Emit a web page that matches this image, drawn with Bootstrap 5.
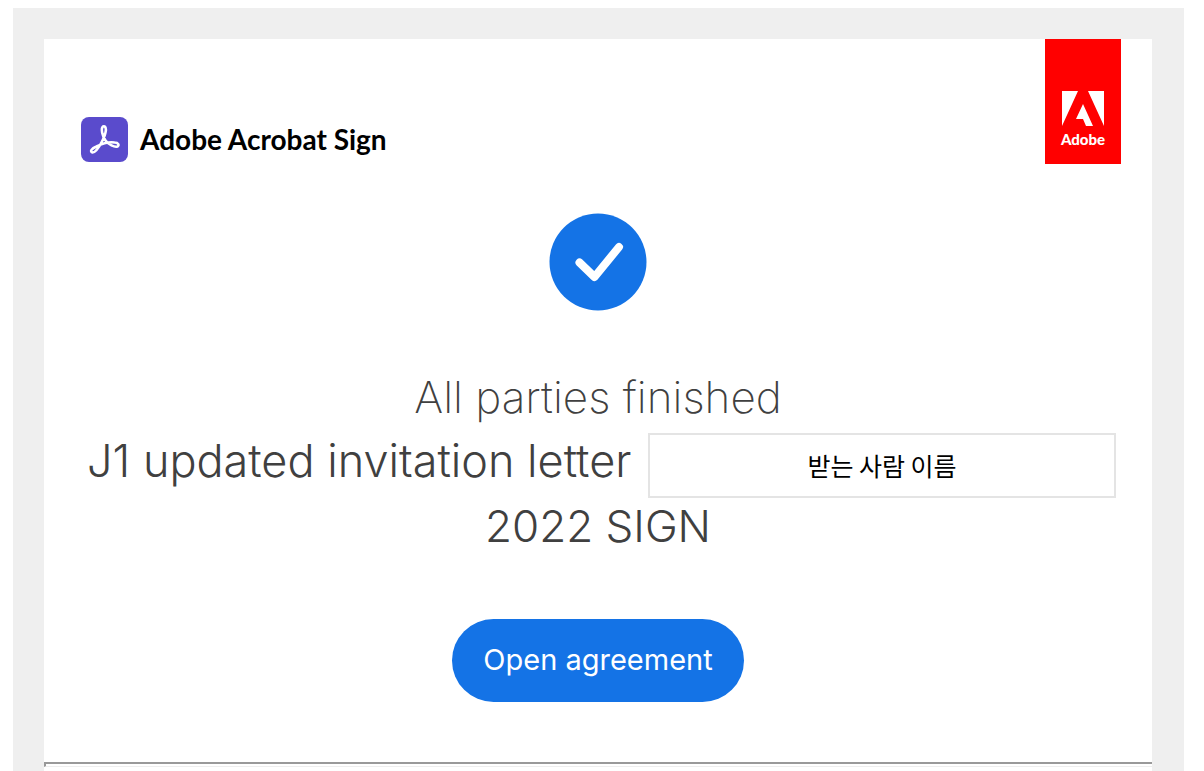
<!DOCTYPE html>
<html lang="en">
<head>
<meta charset="utf-8">
<meta name="viewport" content="width=device-width, initial-scale=1">
<title>Adobe Acrobat Sign</title>
<link href="https://cdn.jsdelivr.net/npm/bootstrap@5.3.0/dist/css/bootstrap.min.css" rel="stylesheet">
<style>
  body { background: #fff; padding: 8px 20px 0 13px; font-family: Inter, "Noto Sans CJK KR", sans-serif; color: #404040; }
  .mail-frame { background: #efefef; padding: 31px 32px 0 31px; min-height: calc(100vh - 8px); }
  .mail-body { flex: 1; }
  .mail-head { padding: 0 31px 0 37px; }
  .brand-name { font: 700 28px/36px Lato, sans-serif; color: #000; padding-bottom: 2px; }
  .brand { margin-top: 78px; }
  .adobe-tag { width: 76px; height: 125px; background: #f00; color: #fff; padding-top: 52px; font: 900 15px/18px Lato, sans-serif; }
  .status-icon { margin-top: 49px; }
  .message { margin-top: 54px; font-size: 44px; line-height: 64px; }
  .message h1 { font-size: 44px; line-height: 64px; font-weight: 200; }
  .message p { font-size: 44px; line-height: 56px; font-weight: 300; }
  .subject { padding: 0 36px 0 43px; font-size: 45px; font-weight: 300; }
  .recipient { width: 468px; margin-top: 4px; height: 65px; border: 2px solid #e4e4e4; font: 400 25px/61px "Noto Sans CJK KR", sans-serif; color: #000; }
  .btn-open { --bs-btn-bg: #1473e6; --bs-btn-color: #fff; --bs-btn-hover-bg: #0d66d0; --bs-btn-hover-color: #fff; margin-top: 65px; padding: 18px 31px 20px; border: 0; border-radius: 42px; font-size: 29px; line-height: 45px; font-weight: 400; }
  .divider { margin: 60px 0 0; border: solid; border-width: 2px 0 1px 2px; border-color: #999 #eee #eee #999; height: 5px; opacity: 1; }
</style>
</head>
<body>
<div class="mail-frame d-flex flex-column">
  <main class="mail-body bg-white">
    <header class="mail-head d-flex justify-content-between align-items-start">
      <div class="brand d-flex align-items-center">
        <svg width="47" height="46" viewBox="0 0 47 46" aria-hidden="true">
          <rect width="47" height="45" rx="8" fill="#5a4bcc"/>
          <path d="M22 9.500c2.500-1 3.500 2 2.500 6-.5 3-1.500 5-3 8-3 6-7 12-10 12-3-1-1-4 4-6 6-3 13-5 18-4 4 0 5 3 3 4-3 1-9-2-12-6-3-4-5-12-2.500-14z" fill="none" stroke="#fff" stroke-width="2.600" stroke-linejoin="round"/>
        </svg>
        <span class="brand-name ms-2 ps-1">Adobe Acrobat Sign</span>
      </div>
      <div class="adobe-tag d-flex flex-column align-items-center">
        <svg width="42" height="35" viewBox="0 0 42 35" fill="#fff" aria-hidden="true"><path d="M0 0h16L0 35zM26 0h16v35zM21 13l10 22h-7l-3-7h-7z"/></svg>
        <span class="mt-1">Adobe</span>
      </div>
    </header>
    <div class="text-center">
      <svg class="status-icon d-block mx-auto" width="98" height="98" viewBox="0 0 98 98" role="img" aria-label="Completed">
        <circle cx="49" cy="49" r="48.500" fill="#1473e6"/>
        <path d="M30.500 49.500L45.500 64 70 34" fill="none" stroke="#fff" stroke-width="8" stroke-linecap="round" stroke-linejoin="round"/>
      </svg>
      <div class="message">
        <h1 class="m-0">All parties finished</h1>
        <div class="subject d-flex flex-wrap justify-content-between">
          <span>J1 updated invitation letter</span>
          <span class="recipient">받는 사람 이름</span>
        </div>
        <p class="m-0">2022 SIGN</p>
      </div>
      <button type="button" class="btn btn-open">Open agreement</button>
    </div>
    <hr class="divider">
  </main>
</div>
<script src="https://cdn.jsdelivr.net/npm/bootstrap@5.3.0/dist/js/bootstrap.bundle.min.js"></script>
</body>
</html>
